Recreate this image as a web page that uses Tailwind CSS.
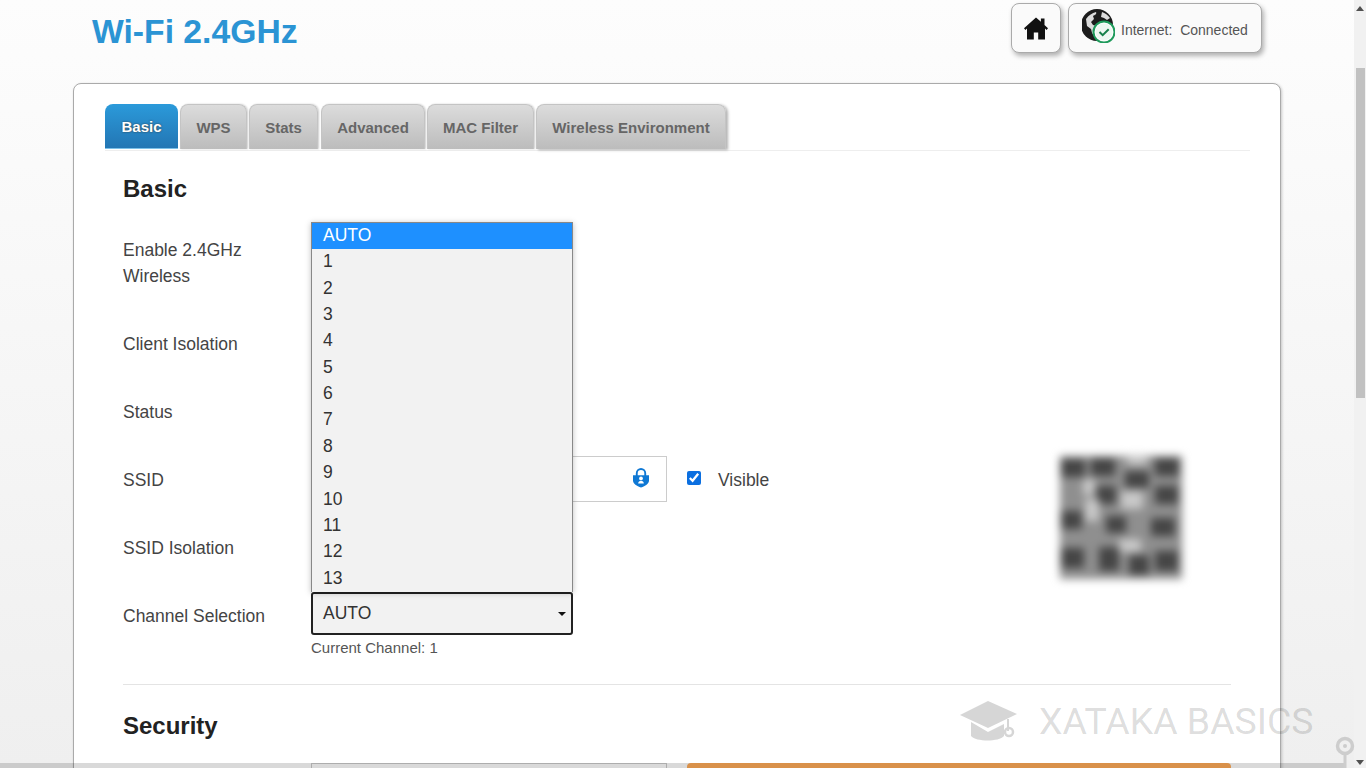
<!DOCTYPE html>
<html lang="en">
<head>
<meta charset="utf-8">
<title>Wi-Fi 2.4GHz</title>
<script src="https://cdn.jsdelivr.net/npm/@tailwindcss/browser@4"></script>
</head>
<body class="m-0">
<div class="relative flex h-[768px] w-[1366px] overflow-hidden bg-white font-['Liberation_Sans',Arial,sans-serif] text-[#444]">
  <main class="h-full w-[1354px] overflow-hidden bg-linear-to-b from-[#fdfdfd] to-[#efefef]">
    <header class="flex h-[83px] items-start pl-[92px] pr-[92px]">
      <h1 class="mt-[10px] text-[33.7px] leading-[42px] font-bold text-[#2b94d4]">Wi-Fi 2.4GHz</h1>
      <div class="ml-auto mt-[3px] flex gap-[7px]">
        <button class="flex h-[50px] w-[50px] items-center justify-center rounded-lg border border-[#aaa] bg-[#fafafa] shadow-[2px_3px_5px_rgba(0,0,0,.3)]">
          <svg width="24" height="23" viewBox="0 0 24 23"><path fill="#111" d="M12 .5 0 11.2l1.4 1.7L3 11.500V22.500h6.800v-7h4.400v7H21V11.500l1.600 1.400L24 11.200 20.500 8V1.500h-3.600v3.300z"/></svg>
        </button>
        <button class="flex h-[50px] w-[194px] items-start rounded-lg border border-[#aaa] bg-[#fafafa] pl-[13px] pt-[5px] shadow-[2px_3px_5px_rgba(0,0,0,.3)]">
          <svg width="33" height="34" viewBox="0 0 33 34">
            <circle cx="15" cy="16" r="16" fill="#1c1c1c"/>
            <path fill="#dcdcdc" d="M4 10c3-4 6-6 10-7 1 2-1 3-3 4l1 3-3 3 2 3 4 1 1 4-3 5c-3 0-3-3-4-6l-4-3zM20 3c3 1 6 3 8 6l-3 2-3-2-3-1z"/>
            <circle cx="22" cy="23" r="10.500" fill="#fff" stroke="#1f9a5b" stroke-width="2"/>
            <circle cx="22" cy="23" r="8.500" fill="#eef7f1"/>
            <path d="m17.500 23 3.200 3.200 6-6" fill="none" stroke="#17804a" stroke-width="2"/>
          </svg>
          <span class="ml-[6px] mt-[11px] whitespace-pre text-[14px] leading-[20px] text-[#555]">Internet:  Connected</span>
        </button>
      </div>
    </header>

    <section class="ml-[73px] w-[1208px] rounded-t-lg border border-[#aaa] bg-white pl-[31px] pr-[30px] pt-[20px] shadow-[1px_1px_3px_rgba(0,0,0,.2)]">
      <nav class="flex h-[47px] items-start gap-[2px] border-b border-[#eee] text-[15px] leading-[46px] font-bold text-[#666]">
        <a class="h-[45px] w-[73px] rounded-t-lg bg-linear-to-b from-[#2b9ada] to-[#2376b4] text-center text-white [text-shadow:0_0_2px_#333] border-b border-[#7cc0e8]">Basic</a>
        <a class="h-[45px] w-[67px] rounded-t-lg border-x border-t border-[#c4c4c4] bg-linear-to-b from-[#dcdcdc] to-[#bcbcbc] text-center shadow-[1px_0_2px_rgba(0,0,0,.2)]">WPS</a>
        <a class="h-[45px] w-[69px] rounded-t-lg border-x border-t border-[#c4c4c4] bg-linear-to-b from-[#dcdcdc] to-[#bcbcbc] text-center shadow-[1px_0_2px_rgba(0,0,0,.2)]">Stats</a>
        <a class="ml-[1px] h-[45px] w-[104px] rounded-t-lg border-x border-t border-[#c4c4c4] bg-linear-to-b from-[#dcdcdc] to-[#bcbcbc] text-center shadow-[1px_0_2px_rgba(0,0,0,.2)]">Advanced</a>
        <a class="h-[45px] w-[107px] rounded-t-lg border-x border-t border-[#c4c4c4] bg-linear-to-b from-[#dcdcdc] to-[#bcbcbc] text-center shadow-[1px_0_2px_rgba(0,0,0,.2)]">MAC Filter</a>
        <a class="h-[45px] w-[190px] rounded-t-lg border-x border-t border-[#c4c4c4] bg-linear-to-b from-[#dcdcdc] to-[#bcbcbc] text-center shadow-[2px_1px_3px_rgba(0,0,0,.3)]">Wireless Environment</a>
      </nav>

      <div class="px-[18px] pr-[19px]">
        <h2 class="flex h-[75px] items-center pt-[1px] text-[24px] font-bold text-[#222]">Basic</h2>

        <div class="text-[17.5px] leading-[26px]">
          <div class="flex h-[94px]">
            <label class="w-[188px] pt-[11px] pr-[40px]">Enable 2.4GHz Wireless</label>
          </div>
          <div class="flex h-[68px]"><label class="w-[188px] pt-[11px]">Client Isolation</label></div>
          <div class="flex h-[68px]"><label class="w-[188px] pt-[11px]">Status</label></div>
          <div class="flex h-[68px]">
            <label class="w-[188px] pt-[11px]">SSID</label>
            <div class="flex h-[46px] w-[356px] items-center justify-end border border-[#ccc] bg-white pr-[17px]">
              <svg width="16" height="21" viewBox="0 0 17 21" class="-mt-[3px]">
                <path d="M4 9V6a4.500 4.500 0 0 1 9 0v3" fill="none" stroke="#0f78d4" stroke-width="2"/>
                <path fill="#0f78d4" d="M0 8h17v6c0 3-4 6-8.500 7C4 20 0 17 0 14z"/>
                <circle cx="8.500" cy="11.500" r="2" fill="#fff"/>
                <path fill="#fff" d="M5.500 17c0-2 1.500-3 3-3s3 1 3 3z"/>
              </svg>
            </div>
            <input type="checkbox" checked class="ml-[20px] mt-[15px] h-[14px] w-[14px] accent-[#0b6fe0]">
            <span class="ml-[17px] pt-[11px]">Visible</span>
            <div class="ml-auto mr-[48px] -mt-[1px] h-[68px] w-[124px]">
              <svg class="overflow-visible blur-[4.500px]" width="124" height="125" viewBox="0 0 124 125">
                <rect x="1" y="1" width="122" height="123" fill="#8f8f8f"/>
                <g fill="#454545">
                  <rect x="2" y="4" width="24" height="18"/><rect x="32" y="3" width="24" height="18"/><rect x="96" y="3" width="24" height="18"/>
                  <rect x="66" y="16" width="24" height="17"/><rect x="37" y="31" width="20" height="18"/><rect x="96" y="31" width="23" height="18"/>
                  <rect x="2" y="56" width="21" height="18"/><rect x="47" y="61" width="20" height="17"/><rect x="92" y="63" width="24" height="18"/>
                  <rect x="2" y="93" width="23" height="20"/><rect x="40" y="92" width="20" height="24"/><rect x="70" y="100" width="20" height="20"/><rect x="96" y="96" width="23" height="20"/>
                </g>
                <g fill="#c8c8c8">
                  <rect x="68" y="0" width="20" height="10"/><rect x="26" y="44" width="14" height="22"/><rect x="62" y="36" width="22" height="18"/><rect x="60" y="84" width="22" height="13"/><rect x="24" y="24" width="12" height="16"/>
                </g>
              </svg>
            </div>
          </div>
          <div class="flex h-[68px]"><label class="w-[188px] pt-[11px]">SSID Isolation</label></div>
          <div class="flex">
            <label class="w-[188px] pt-[11px]">Channel Selection</label>
            <div class="relative w-[262px]">
              <ul class="absolute bottom-full left-0 w-[262px] border border-b-0 border-[#888] bg-[#f2f2f2] leading-[25px] text-[#333] shadow-[0_1px_6px_rgba(0,0,0,.25)]">
                <li class="h-[26px] bg-[#1e90ff] px-[11px] text-white">AUTO</li>
                <li class="h-[26.380px] px-[11px]">1</li>
                <li class="h-[26.380px] px-[11px]">2</li>
                <li class="h-[26.380px] px-[11px]">3</li>
                <li class="h-[26.380px] px-[11px]">4</li>
                <li class="h-[26.380px] px-[11px]">5</li>
                <li class="h-[26.380px] px-[11px]">6</li>
                <li class="h-[26.380px] px-[11px]">7</li>
                <li class="h-[26.380px] px-[11px]">8</li>
                <li class="h-[26.380px] px-[11px]">9</li>
                <li class="h-[26.380px] px-[11px]">10</li>
                <li class="h-[26.380px] px-[11px]">11</li>
                <li class="h-[26.380px] px-[11px]">12</li>
                <li class="h-[26.380px] px-[11px]">13</li>
              </ul>
              <div class="flex h-[43px] items-center justify-between rounded-[3px] border-2 border-[#222] bg-[#f2f2f2] pl-[10px] pr-[5px] text-[#333]">
                <span class="-mt-[2px]">AUTO</span>
                <span class="h-0 w-0 border-x-[4px] border-t-[4px] border-x-transparent border-t-[#111]"></span>
              </div>
              <p class="mt-[4px] whitespace-nowrap text-[15px] leading-[18px] text-[#555]">Current Channel: 1</p>
            </div>
          </div>
        </div>

        <hr class="mt-[27px] border-t border-[#e4e4e4]">
        <h2 class="flex h-[78px] items-center pt-[3px] text-[24px] font-bold text-[#222]">Security</h2>
        <div class="flex pl-[188px]">
          <div class="h-[46px] w-[356px] border border-[#ccc] bg-white"></div>
          <div class="ml-[20px] h-[46px] flex-1 rounded-t-[4px] bg-[#ffab58]"></div>
        </div>
      </div>
    </section>
  </main>

  <aside class="flex h-full w-[12px] flex-col items-center bg-[#f1f1f1]">
    <span class="mt-[6px] h-0 w-0 border-x-[4px] border-b-[5px] border-x-transparent border-b-[#505050]"></span>
    <div class="mt-[57px] h-[330px] w-[9px] bg-[#c1c1c1]"></div>
    <span class="mt-auto mb-[3px] h-0 w-0 border-x-[4px] border-t-[5px] border-x-transparent border-t-[#505050]"></span>
  </aside>

  <div class="pointer-events-none absolute bottom-0 left-0 h-[5px] w-[1345px] bg-black/15"></div>
  <div class="pointer-events-none absolute bottom-[3px] left-[960px] flex h-[65px] w-[400px] items-start">
    <svg width="58" height="44" viewBox="0 0 58 44" class="mt-[1px]">
      <path fill="#d6d6d6" d="M28 0 57 13 28 27 0 14z"/>
      <path fill="#d6d6d6" d="M11 21v14c5 6 28 6 33 0V23L28 31z"/>
      <path d="M48 18v12" stroke="#d6d6d6" stroke-width="2"/>
      <circle cx="49" cy="31" r="4" fill="none" stroke="#d6d6d6" stroke-width="2.500"/>
    </svg>
    <span class="ml-[21px] mt-[-2px] whitespace-nowrap font-['Roboto',sans-serif] text-[37.4px] leading-[46px] font-normal text-black/15">XATAKA BASICS</span>
  </div>
  <svg class="pointer-events-none absolute bottom-0 left-[1333px]" width="24" height="32" viewBox="0 0 24 32">
    <circle cx="12" cy="10" r="7.500" fill="none" stroke="#cdcdcd" stroke-width="3.500"/>
    <circle cx="12" cy="10" r="2" fill="#cdcdcd"/>
    <path d="M12 18v14" stroke="#cdcdcd" stroke-width="3"/>
  </svg>
</div>
</body>
</html>
